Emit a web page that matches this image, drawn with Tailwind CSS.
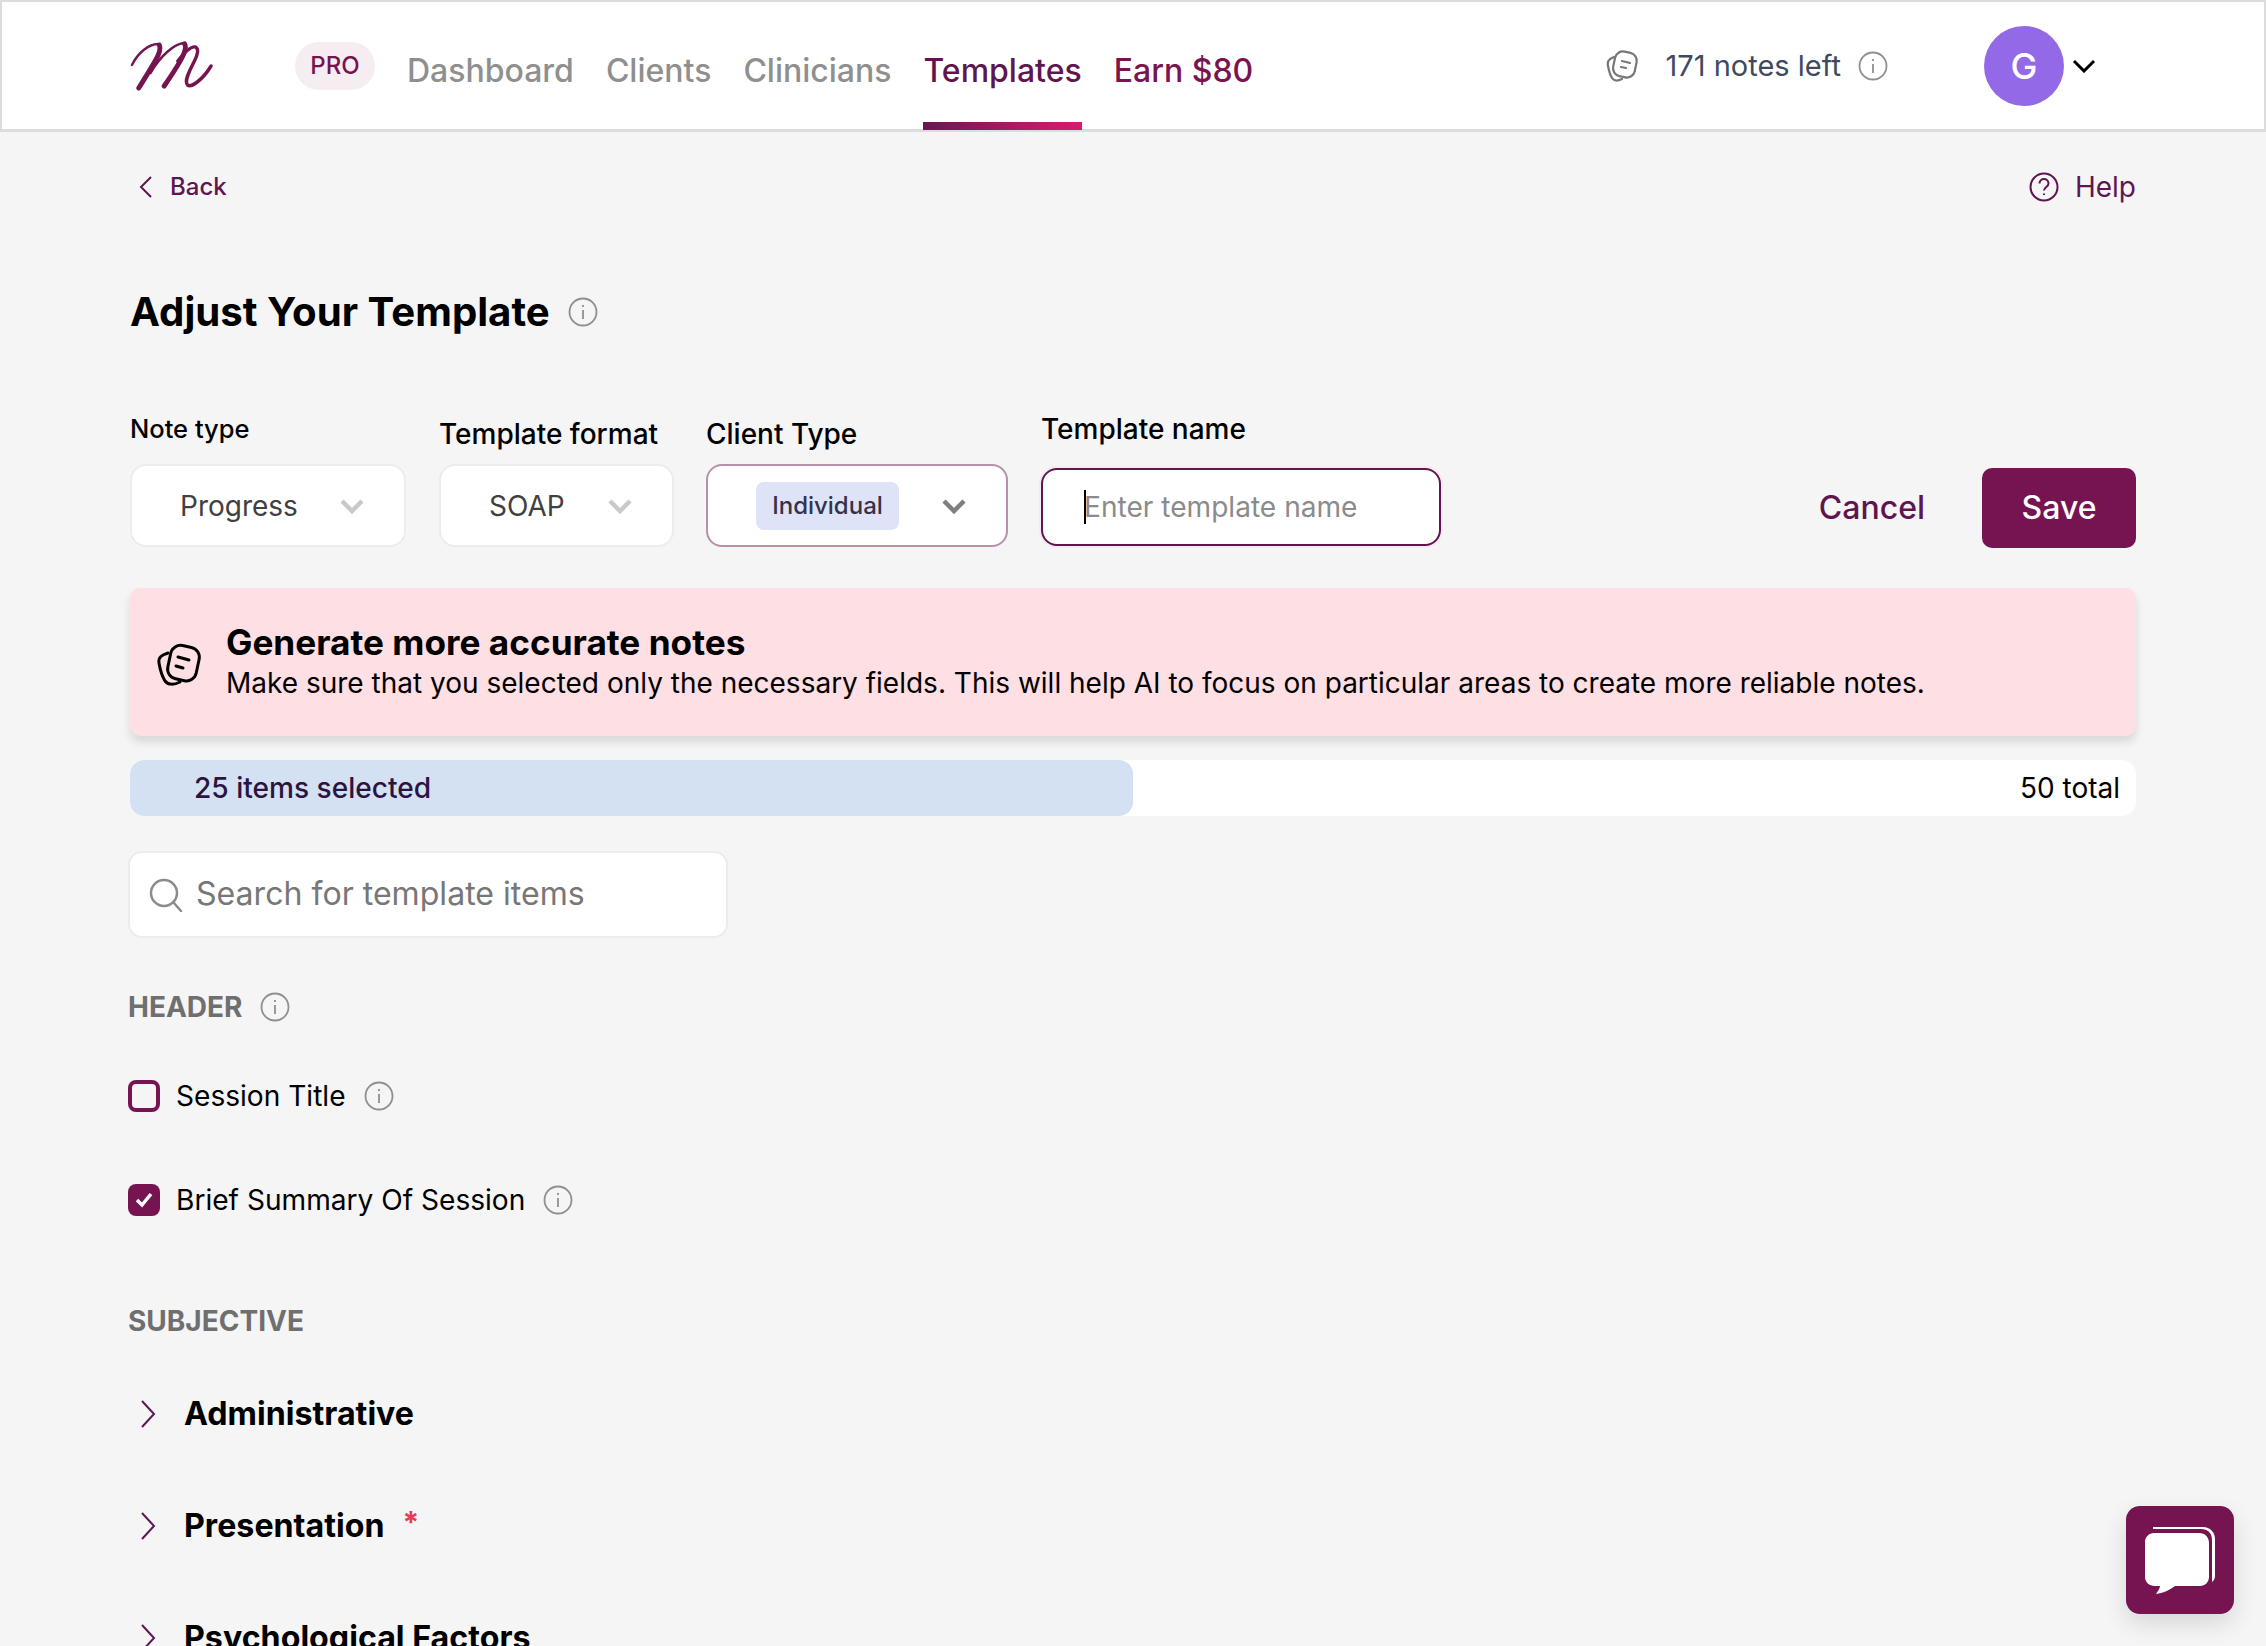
<!DOCTYPE html>
<html lang="en">
<head>
  <meta charset="UTF-8" />
  <title>Adjust Your Template</title>
  <script src="https://cdn.jsdelivr.net/npm/@tailwindcss/browser@4"></script>
</head>
<body class="bg-[#f5f5f6] font-['Inter',sans-serif] text-black">
  <div class="relative h-[1646px] w-[2266px] overflow-hidden">
    <!-- nav -->
    <header class="flex h-[132px] items-center border-2 border-[#dcdcdc] border-b-[3px] bg-white pl-[127px] pr-[168px]">
      <svg class="h-[50px] w-[84px] shrink-0" viewBox="0 0 86 50" preserveAspectRatio="none" fill="none" stroke="#751450" stroke-linecap="round">
        <path d="M3 24C9 12 20 3 30 3" stroke-width="2.500"/>
        <path d="M31 4C34 10 29 17 10 47" stroke-width="5"/>
        <path d="M22 32C32 15 46 3 56 2" stroke-width="2.500"/>
        <path d="M57 3C60 8 55 18 36 45" stroke-width="5"/>
        <path d="M50 20C58 10 64 5 68 6c4 2 2 8-1 14C62 30 56 40 60 44c4 3 16-6 24-19" stroke-width="3.500"/>
      </svg>
      <span class="ml-[82px] flex h-[48px] w-[80px] items-center justify-center rounded-[24px] bg-[#f6edf3] text-[24px] font-medium text-[#751450]">PRO</span>
      <nav class="ml-[32px] flex h-[129px] items-center gap-[32px] pt-[11px] text-[32px] font-medium text-[#8f8f8f]">
        <a>Dashboard</a>
        <a>Clients</a>
        <a>Clinicians</a>
        <a class="relative flex h-full items-center text-[#5f1650]">Templates
          <span class="absolute inset-x-0 bottom-0 h-[8px] bg-gradient-to-r from-[#6b1650] to-[#d91a6f]"></span>
        </a>
        <a class="text-[#7a1450]">Earn $80</a>
      </nav>
      <div class="ml-auto flex items-center">
        <svg class="h-[34px] w-[34px] text-[#777]" viewBox="0 0 34 34" fill="none" stroke="currentColor" stroke-width="2.2" stroke-linecap="round">
          <path d="M9 8C4 10 2 12 3 17c1 5 2 9 4 12 2 3 6 3 10 1"/>
          <rect x="9" y="3" width="22" height="25" rx="8" transform="rotate(12 20 15)" fill="#fff"/>
          <path d="M17 12l8 2M16 18l5 1"/>
        </svg>
        <span class="ml-[27px] text-[29px] text-[#3f4a5c]">171 notes left</span>
        <svg class="ml-[17px] h-[30px] w-[30px] text-[#8f8f8f]" viewBox="0 0 30 30" fill="none" stroke="currentColor" stroke-width="1.8"><circle cx="15" cy="15" r="13.5"/><path d="M15 13v9M15 8v2"/></svg>
        <span class="ml-[96px] flex h-[80px] w-[80px] items-center justify-center rounded-full bg-[#9469e8] text-[36px] font-medium text-white">G</span>
        <svg class="ml-[8px] h-[14px] w-[24px]" viewBox="0 0 24 14" fill="none" stroke="#000" stroke-width="3"><path d="M2 2l10 10L22 2"/></svg>
      </div>
    </header>

    <main class="px-[130px]">
      <div class="flex h-[94px] items-center justify-between pt-[16px] text-[#5f1650]">
        <a class="flex items-center gap-[17px] pl-[9px] text-[24px] font-medium">
          <svg class="h-[24px] w-[14px]" viewBox="0 0 14 24" fill="none" stroke="currentColor" stroke-width="2"><path d="M12 2L2 12l10 10"/></svg>
          Back
        </a>
        <a class="flex items-center gap-[16px] text-[28px]">
          <svg class="h-[30px] w-[30px]" viewBox="0 0 30 30" fill="none" stroke="currentColor" stroke-width="2"><circle cx="15" cy="15" r="13.5"/><path d="M10.5 11.5c0-6 9-6 9 0 0 3.500-4.500 3.500-4.500 7M15 21.500v1.500"/></svg>
          Help
        </a>
      </div>

      <div class="mt-[60px] flex items-center gap-[18px]">
        <h1 class="text-[40.2px] leading-[52px] font-bold">Adjust Your Template</h1>
        <svg class="h-[30px] w-[30px] text-[#8f8f8f]" viewBox="0 0 30 30" fill="none" stroke="currentColor" stroke-width="1.8"><circle cx="15" cy="15" r="13.500"/><path d="M15 13v9M15 8v2"/></svg>
      </div>

      <div class="mt-[73px] flex items-start">
        <div class="flex w-[276px] flex-col">
          <label class="h-[51px] pt-[2px] text-[25.5px] leading-[32px] font-medium">Note type</label>
          <div class="mt-[2px] flex h-[83px] items-center justify-between rounded-[16px] border-2 border-[#ececec] bg-white pr-[40px] pl-[48px] text-[28px] text-[#404040]">
            Progress
            <svg class="h-[16px] w-[24px] text-[#c9c9c9]" viewBox="0 0 24 16" fill="none" stroke="currentColor" stroke-width="4.500"><path d="M2 3l10 10L22 3"/></svg>
          </div>
        </div>
        <div class="ml-[33px] flex w-[235px] flex-col">
          <label class="h-[53px] pt-[7px] text-[28px] leading-[32px] font-medium">Template format</label>
          <div class="flex h-[83px] items-center justify-between rounded-[16px] border-2 border-[#ececec] bg-white pr-[40px] pl-[48px] text-[28px] text-[#404040]">
            SOAP
            <svg class="h-[16px] w-[24px] text-[#c9c9c9]" viewBox="0 0 24 16" fill="none" stroke="currentColor" stroke-width="4.500"><path d="M2 3l10 10L22 3"/></svg>
          </div>
        </div>
        <div class="ml-[32px] flex w-[302px] flex-col">
          <label class="h-[53px] pt-[7px] text-[28px] leading-[32px] font-medium">Client Type</label>
          <div class="flex h-[83px] items-center justify-between rounded-[16px] border-2 border-[#b692a8] bg-white pr-[40px] pl-[48px]">
            <span class="flex h-[48px] w-[143px] items-center justify-center rounded-[8px] bg-[#dfe3f8] text-[24px] font-medium text-[#35324a]">Individual</span>
            <svg class="h-[16px] w-[24px] text-[#7f7f7f]" viewBox="0 0 24 16" fill="none" stroke="currentColor" stroke-width="4.500"><path d="M2 3l10 10L22 3"/></svg>
          </div>
        </div>
        <div class="ml-[33px] flex w-[400px] flex-col">
          <label class="h-[57px] pt-[2px] text-[28px] leading-[32px] font-medium">Template name</label>
          <div class="flex h-[78px] items-center rounded-[16px] border-2 border-[#5f1650] bg-white pl-[41px] text-[28.1px] text-[#8b8b8b] shadow-[0_0_0_2px_#f6e9f1]">
            <span class="mr-[-2px] h-[34px] w-[2px] bg-black"></span>Enter template name
          </div>
        </div>
        <div class="mt-[57px] ml-auto flex items-center">
          <button class="text-[32px] font-medium text-[#5f1650]">Cancel</button>
          <button class="ml-[57px] h-[80px] w-[154px] rounded-[10px] bg-[#751450] text-[32px] font-medium text-white">Save</button>
        </div>
      </div>

      <section class="mt-[40px] flex h-[148px] items-start rounded-[10px] bg-[#fedfe3] pt-[32px] pl-[26px] shadow-[0_6px_10px_rgba(0,0,0,0.12)]">
        <svg class="mt-[22px] h-[46px] w-[46px] shrink-0" viewBox="0 0 46 46" fill="none" stroke="#000" stroke-width="3" stroke-linecap="round">
          <path d="M12 11C6 13 2 15 3 21c1 6 3 13 6 18 3 4 9 4 15 1"/>
          <rect x="13" y="4" width="29" height="34" rx="10" transform="rotate(12 27 21)" fill="#fedfe3"/>
          <path d="M22 15l11 3M20 24l7 2"/>
        </svg>
        <div class="ml-[24px]">
          <h2 class="text-[35.2px] leading-[45px] font-bold">Generate more accurate notes</h2>
          <p class="text-[28px] leading-[36px]">Make sure that you selected only the necessary fields. This will help AI to focus on particular areas to create more reliable notes.</p>
        </div>
      </section>

      <div class="mt-[24px] flex h-[56px] items-center justify-between overflow-hidden rounded-[14px] bg-white pr-[16px]">
        <div class="flex h-full w-[1003px] items-center rounded-[14px] bg-[#d3e1f2] pl-[64px] text-[28.1px] font-medium text-[#2c1440]">25 items selected</div>
        <span class="text-[28px]">50 total</span>
      </div>

      <div class="mt-[35px] ml-[-2px] flex h-[87px] w-[600px] items-center rounded-[14px] border-2 border-[#ececec] bg-white pl-[19px] text-[32.1px] text-[#777]">
        <svg class="h-[34px] w-[34px] shrink-0 text-[#8b8b8b]" viewBox="0 0 34 34" fill="none" stroke="currentColor" stroke-width="2.500" stroke-linecap="round"><circle cx="15" cy="15" r="13"/><path d="M25 25l7 8"/></svg>
        <span class="ml-[13px]">Search for template items</span>
      </div>

      <div class="mt-[51px] ml-[-2px] flex items-center gap-[18px] text-[#6f6f6f]">
        <span class="text-[28px] leading-[36px] font-bold">HEADER</span>
        <svg class="h-[30px] w-[30px] text-[#8f8f8f]" viewBox="0 0 30 30" fill="none" stroke="currentColor" stroke-width="1.800"><circle cx="15" cy="15" r="13.500"/><path d="M15 13v9M15 8v2"/></svg>
      </div>

      <div class="mt-[53px] ml-[-2px] flex h-[36px] items-center">
        <span class="h-[32px] w-[32px] rounded-[8px] border-[4px] border-[#751450]"></span>
        <span class="ml-[16px] text-[28.1px]">Session Title</span>
        <svg class="ml-[18px] h-[30px] w-[30px] text-[#8f8f8f]" viewBox="0 0 30 30" fill="none" stroke="currentColor" stroke-width="1.800"><circle cx="15" cy="15" r="13.500"/><path d="M15 13v9M15 8v2"/></svg>
      </div>

      <div class="mt-[68px] ml-[-2px] flex h-[36px] items-center">
        <span class="flex h-[32px] w-[32px] items-center justify-center rounded-[8px] bg-[#751450]">
          <svg class="h-[16px] w-[18px]" viewBox="0 0 18 16" fill="none" stroke="#fff" stroke-width="3.500"><path d="M2 8l5 5L16 2"/></svg>
        </span>
        <span class="ml-[16px] text-[28.1px]">Brief Summary Of Session</span>
        <svg class="ml-[18px] h-[30px] w-[30px] text-[#8f8f8f]" viewBox="0 0 30 30" fill="none" stroke="currentColor" stroke-width="1.800"><circle cx="15" cy="15" r="13.500"/><path d="M15 13v9M15 8v2"/></svg>
      </div>

      <div class="mt-[85px] ml-[-2px] text-[28px] leading-[36px] font-bold text-[#6f6f6f]">SUBJECTIVE</div>

      <div class="mt-[55px] flex h-[40px] items-center">
        <svg class="ml-[10px] h-[30px] w-[16px]" viewBox="0 0 16 30" fill="none" stroke="#5f1650" stroke-width="2"><path d="M2 2l12 13L2 28"/></svg>
        <span class="ml-[28px] text-[32.2px] font-bold">Administrative</span>
      </div>
      <div class="mt-[72px] flex h-[40px] items-center">
        <svg class="ml-[10px] h-[30px] w-[16px]" viewBox="0 0 16 30" fill="none" stroke="#5f1650" stroke-width="2"><path d="M2 2l12 13L2 28"/></svg>
        <span class="ml-[28px] text-[32.2px] font-bold">Presentation</span>
        <span class="mb-[8px] ml-[18px] text-[30px] font-bold text-[#ea3b57]">*</span>
      </div>
      <div class="mt-[72px] flex h-[40px] items-center">
        <svg class="ml-[10px] h-[30px] w-[16px]" viewBox="0 0 16 30" fill="none" stroke="#5f1650" stroke-width="2"><path d="M2 2l12 13L2 28"/></svg>
        <span class="ml-[28px] text-[32.2px] font-bold">Psychological Factors</span>
      </div>
    </main>

    <!-- chat launcher -->
    <button class="absolute top-[1506px] left-[2126px] flex h-[108px] w-[108px] items-center justify-center rounded-[14px] bg-[#751450] shadow-[0_10px_24px_rgba(0,0,0,0.12)]">
      <svg class="h-[70px] w-[74px]" viewBox="0 0 74 70">
        <path d="M10 2h50c7 0 12 5 12 12v36c0 4-1 5-3 7V15c0-7-4-11-11-11H10z" fill="#fff"/>
        <path d="M2 17c0-5 4-9 9-9h45c6 0 10 4 10 10v34c0 5-4 9-9 9H32c-5 4-12 7-19 8 2-3 4-6 4-8h-5C6 61 2 57 2 52z" fill="#fff"/>
      </svg>
    </button>
  </div>
</body>
</html>
